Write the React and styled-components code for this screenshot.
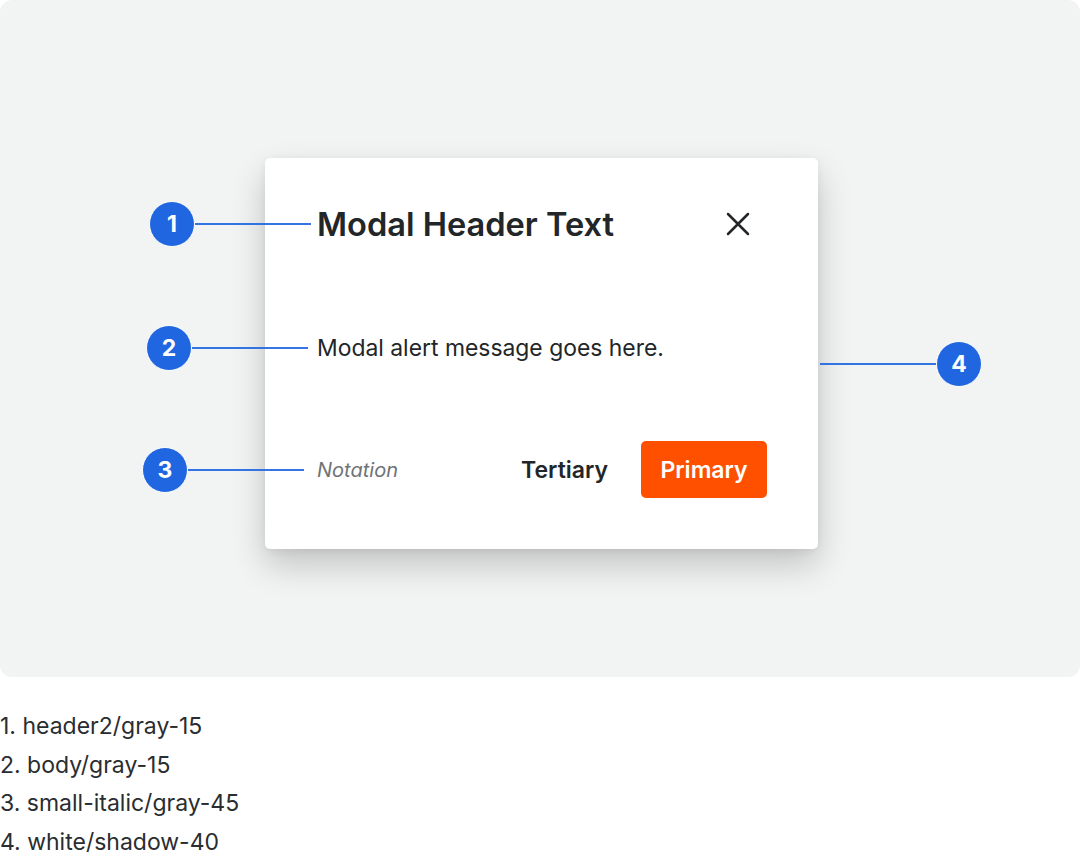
import React from 'react';
import styled, { createGlobalStyle } from 'styled-components';

const gray15 = '#222628';
const gray45 = '#6f7376';
const blue = '#1f66e0';
const orange = '#ff5000';

const GlobalStyle = createGlobalStyle`
  body {
    margin: 0;
    background: #ffffff;
    font-family: Inter, "Noto Sans", sans-serif;
    color: ${gray15};
  }
`;

const Canvas = styled.div`
  display: flex;
  align-items: flex-start;
  height: 677px;
  box-sizing: border-box;
  padding: 158px 0 0 265px;
  background: #f2f3f3;
  border-radius: 12px;
`;

const Modal = styled.div`
  position: relative;
  width: 553px;
  height: 391px;
  box-sizing: border-box;
  padding: 46px 51px 51px 52px;
  display: flex;
  flex-direction: column;
  background: #ffffff;
  border-radius: 5px;
  box-shadow: 0 16px 34px rgba(0, 0, 0, 0.2), 0 2px 8px rgba(0, 0, 0, 0.06);
`;

const Row = styled.div`
  position: relative;
  display: flex;
  align-items: center;
`;

const HeaderRow = styled(Row)`
  height: 40px;
  justify-content: space-between;
`;

const Title = styled.h2`
  margin: 0;
  font-size: 32.6px;
  font-weight: 600;
  color: ${gray15};
`;

const CloseButton = styled.button`
  display: flex;
  align-items: center;
  justify-content: center;
  width: 26px;
  height: 26px;
  margin-right: 16px;
  padding: 0;
  border: none;
  background: transparent;
  color: ${gray15};
  cursor: pointer;
`;

const BodyRow = styled(Row)`
  height: 30px;
  margin-top: 89px;
`;

const Message = styled.p`
  margin: 0;
  font-size: 22.9px;
  color: ${gray15};
`;

const FooterRow = styled(Row)`
  margin-top: 78px;
`;

const Notation = styled.span`
  flex: 1;
  font-size: 20px;
  font-style: italic;
  color: ${gray45};
`;

const TertiaryButton = styled.button`
  border: none;
  background: transparent;
  padding: 0;
  margin-right: 33px;
  font-family: inherit;
  font-size: 23px;
  font-weight: 600;
  color: ${gray15};
  cursor: pointer;
`;

const PrimaryButton = styled.button`
  width: 126px;
  height: 57px;
  border: none;
  border-radius: 5px;
  background: ${orange};
  font-family: inherit;
  font-size: 23px;
  font-weight: 600;
  color: #ffffff;
  cursor: pointer;
`;

const Callout = styled.div`
  position: absolute;
  top: calc(50% + ${({ shift }) => shift || 0}px);
  display: flex;
  align-items: center;
  transform: translateY(-50%);
  ${({ side, offset }) =>
    side === 'right'
      ? `left: calc(100% + ${offset}px); flex-direction: row-reverse;`
      : `right: calc(100% + ${offset}px);`}
`;

const Badge = styled.span`
  display: flex;
  align-items: center;
  justify-content: center;
  width: 46px;
  height: 46px;
  border-radius: 50%;
  background: ${blue};
  color: #ffffff;
  font-size: 23px;
  font-weight: 700;
  border: 1px solid #ffffff;
  box-sizing: border-box;
`;

const Leader = styled.span`
  width: ${({ length }) => length}px;
  height: 2px;
  background: ${blue};
  opacity: 0.9;
`;

const Legend = styled.ol`
  list-style: none;
  margin: 0;
  padding: 30px 0 0 0;
`;

const LegendItem = styled.li`
  font-size: 23px;
  line-height: 38.5px;
  color: #2a2d2f;
`;

const Marker = ({ n, length, offset, side, shift }) => (
  <Callout side={side} offset={offset} shift={shift}>
    <Badge>{n}</Badge>
    <Leader length={length} />
  </Callout>
);

const CloseIcon = () => (
  <svg width="24" height="24" viewBox="0 0 24 24" fill="none">
    <path d="M2 2 L22 22 M22 2 L2 22" stroke="currentColor" strokeWidth="2.5" strokeLinecap="round" />
  </svg>
);

export default function App() {
  return (
    <>
      <GlobalStyle />
      <Canvas>
        <Modal>
          <Marker side="right" n="4" length={116} offset={2} shift={10} />
          <HeaderRow>
            <Marker n="1" length={116} offset={6} />
            <Title>Modal Header Text</Title>
            <CloseButton aria-label="Close">
              <CloseIcon />
            </CloseButton>
          </HeaderRow>
          <BodyRow>
            <Marker n="2" length={116} offset={9} />
            <Message>Modal alert message goes here.</Message>
          </BodyRow>
          <FooterRow>
            <Marker n="3" length={116} offset={13} />
            <Notation>Notation</Notation>
            <TertiaryButton>Tertiary</TertiaryButton>
            <PrimaryButton>Primary</PrimaryButton>
          </FooterRow>
        </Modal>
      </Canvas>
      <Legend>
        <LegendItem>1. header2/gray-15</LegendItem>
        <LegendItem>2. body/gray-15</LegendItem>
        <LegendItem>3. small-italic/gray-45</LegendItem>
        <LegendItem>4. white/shadow-40</LegendItem>
      </Legend>
    </>
  );
}
